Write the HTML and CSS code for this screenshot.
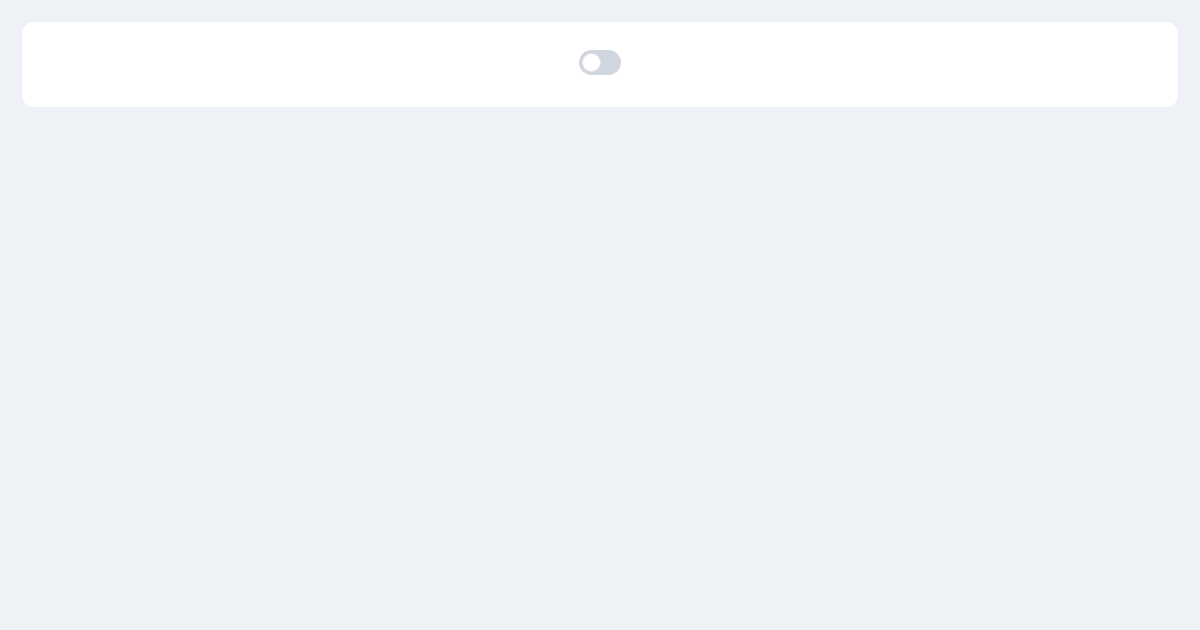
FILE: index.html
```html
<!DOCTYPE html>
<html>
<head>
<meta charset="utf-8">
<link rel="stylesheet" href="styles.css">
</head>
<body>
<div class="card">
  <button class="toggle" aria-label="Toggle"><span class="knob"></span></button>
</div>
</body>
</html>
```
FILE: styles.css
```css
html, body { margin: 0; padding: 0; }
body {
  background: #eef1f6;
  padding: 22px;
  font-family: "Inter", "Liberation Sans", sans-serif;
  min-height: 630px;
  box-sizing: border-box;
}
.card {
  background: #ffffff;
  border-radius: 12px;
  padding: 28px 0 32px;
  display: flex;
  justify-content: center;
}
.toggle {
  width: 42px;
  height: 25px;
  border: none;
  padding: 0 3px;
  border-radius: 13px;
  background: #d0d6dd;
  display: flex;
  align-items: center;
  cursor: pointer;
}
.knob {
  width: 19px;
  height: 19px;
  border-radius: 50%;
  background: #ffffff;
  box-sizing: border-box;
  border: 1px solid #e5e7eb;
}
```
